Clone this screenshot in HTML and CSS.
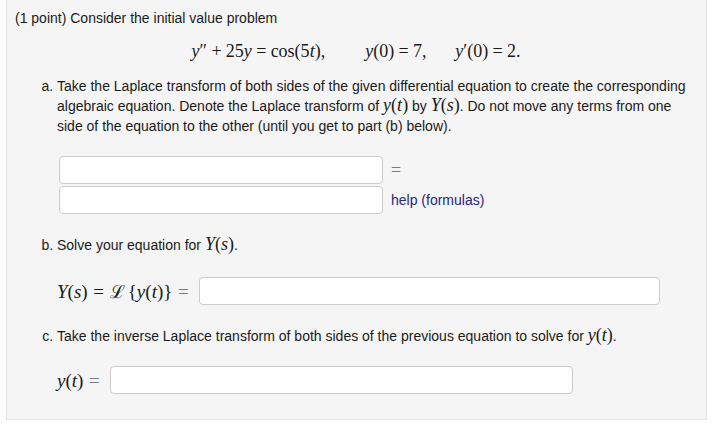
FILE: index.html
```html
<!DOCTYPE html>
<html>
<head>
<meta charset="utf-8">
<link rel="stylesheet" href="styles.css">
</head>
<body>
<div class="well">
  <p class="intro">(1 point) Consider the initial value problem</p>
  <div class="display-eq">
    <span class="m"><i>y</i>″<span class="op">+</span>25<i>y</i><span class="op">=</span>cos(5<i>t</i>),</span>
    <span class="m"><i>y</i>(0)<span class="op">=</span>7,<span class="quad"></span><i>y</i>′(0)<span class="op">=</span>2.</span>
  </div>
  <ol class="parts">
    <li>
      <p class="prompt">Take the Laplace transform of both sides of the given differential equation to create the corresponding algebraic equation. Denote the Laplace transform of <span class="mi"><i>y</i>(<i>t</i>)</span> by <span class="mi"><i>Y</i>(<i>s</i>)</span>. Do not move any terms from one side of the equation to the other (until you get to part (b) below).</p>
      <div class="answer-grid">
        <input class="field wide" type="text">
        <span class="eq-sign">=</span>
        <input class="field wide" type="text">
        <a class="help" href="#">help (formulas)</a>
      </div>
    </li>
    <li class="part-b">
      <p class="prompt">Solve your equation for <span class="mi big"><i>Y</i>(<i>s</i>)</span>.</p>
      <div class="answer-row">
        <span class="mi label"><i>Y</i>(<i>s</i>)<span class="op">=</span><span class="cal">ℒ</span>{<i>y</i>(<i>t</i>)}<span class="op eq-sign">=</span></span>
        <input class="field long" type="text">
      </div>
    </li>
    <li class="part-c">
      <p class="prompt">Take the inverse Laplace transform of both sides of the previous equation to solve for <span class="mi"><i>y</i>(<i>t</i>)</span>.</p>
      <div class="answer-row">
        <span class="mi label"><i>y</i>(<i>t</i>)<span class="op eq-sign">=</span></span>
        <input class="field mid" type="text">
      </div>
    </li>
  </ol>
</div>
</body>
</html>
```

FILE: styles.css
```css
html, body {
  margin: 0;
  padding: 0;
  background: #ffffff;
}

body {
  font-family: "Liberation Sans", Arial, sans-serif;
  font-size: 14px;
  color: #1a1a1a;
}

.well {
  margin: 0 8px 0 6px;
  padding: 10px 9px 10px 8px;
  background: #f5f5f5;
  border: 1px solid #e3e3e3;
  border-top: 0;
  height: 420px;
  box-sizing: border-box;
}

.intro {
  margin: 0;
  line-height: 16px;
}

.display-eq {
  display: flex;
  justify-content: center;
  gap: 40px;
  margin: 14px 0 0 0;
  font-family: "Liberation Serif", "DejaVu Serif", serif;
  font-size: 18px;
  line-height: 22px;
}

.m i, .mi i {
  font-style: italic;
}

.op {
  margin: 0 0.24em;
}

.quad {
  display: inline-block;
  width: 1.6em;
}

.parts {
  list-style: lower-alpha;
  margin: 14px 0 0 0;
  padding: 0 0 0 42px;
}

.prompt {
  margin: 0;
  line-height: 20px;
}

.mi {
  font-family: "Liberation Serif", "DejaVu Serif", serif;
  font-size: 18px;
  line-height: 1;
}

.answer-grid {
  display: grid;
  grid-template-columns: 324px auto;
  column-gap: 8px;
  row-gap: 2px;
  align-items: center;
  margin: 20px 0 0 2px;
}

.field {
  height: 28px;
  box-sizing: border-box;
  border: 1px solid #cccccc;
  border-radius: 4px;
  background: #ffffff;
  margin: 0;
  padding: 0 6px;
  font: inherit;
}

.wide {
  width: 324px;
}

.eq-sign {
  color: #7a7a7a;
  font-family: "Liberation Serif", serif;
  font-size: 18px;
}

.help {
  color: #262688;
  text-decoration: none;
}

.answer-row {
  display: flex;
  align-items: center;
  gap: 5px;
  margin: 22px 0 0 0;
}

.label {
  white-space: nowrap;
  font-size: 19px;
}

.label .op {
  margin: 0 0.3em;
}

.label .eq-sign {
  font-size: 19px;
}

.cal {
  font-family: "DejaVu Serif", serif;
  font-size: 18px;
  margin-right: 3px;
}

.long {
  width: 461px;
}

.mid {
  width: 463px;
}

.part-b {
  margin-top: 21px;
}

.part-c {
  margin-top: 21px;
}

.part-c .answer-row {
  margin-top: 20px;
}
```
